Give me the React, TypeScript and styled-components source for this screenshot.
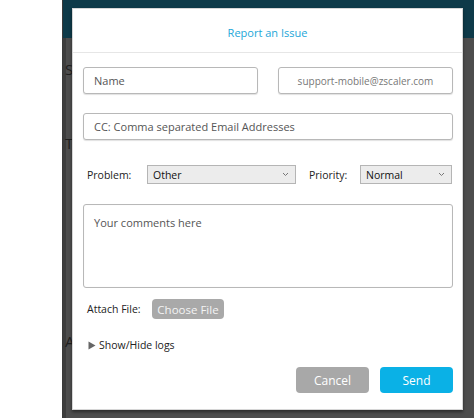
import { FC } from "react";
import styled, { createGlobalStyle } from "styled-components";

const GlobalStyle = createGlobalStyle`
  html, body {
    margin: 0;
    padding: 0;
    background: #ffffff;
    font-family: "Open Sans", "Noto Sans", sans-serif;
  }
  * {
    box-sizing: border-box;
  }
`;

const App: FC = () => {
  return (
    <>
      <GlobalStyle />
      <Page>
        <Gutter />
        <AppShell>
          <AppHeader />
          <AppBody>
            <BackLetter $top={22}>S</BackLetter>
            <BackLetter $top={56}>T</BackLetter>
            <BackLetter $top={180}>A</BackLetter>
          </AppBody>
          <Dialog>
            <DialogHeader>Report an Issue</DialogHeader>
            <DialogContent>
              <Row>
                <HalfInput placeholder="Name" />
                <EmailInput value="support-mobile@zscaler.com" readOnly />
              </Row>
              <TextInput placeholder="CC: Comma separated Email Addresses" />
              <SelectRow>
                <Label $width={60}>Problem:</Label>
                <SelectBox $width={149}>
                  <span>Other</span>
                  <Chevron />
                </SelectBox>
                <Label $width={51} $gap={13}>
                  Priority:
                </Label>
                <SelectBox $width={92}>
                  <span>Normal</span>
                  <Chevron />
                </SelectBox>
              </SelectRow>
              <Comments placeholder="Your comments here" />
              <AttachRow>
                <Label $width={65}>Attach File:</Label>
                <ChooseFile>Choose File</ChooseFile>
              </AttachRow>
              <LogsToggle>
                <Triangle />
                Show/Hide logs
              </LogsToggle>
              <Actions>
                <ActionButton $primary={false}>Cancel</ActionButton>
                <ActionButton $primary>Send</ActionButton>
              </Actions>
            </DialogContent>
          </Dialog>
        </AppShell>
      </Page>
    </>
  );
};

const Chevron: FC = () => (
  <svg width="7" height="5" viewBox="0 0 7 5">
    <path d="M1 1 L3.5 3.5 L6 1" fill="none" stroke="#777" strokeWidth="1" />
  </svg>
);

const Triangle: FC = () => (
  <svg width="8" height="9" viewBox="0 0 8 9">
    <path d="M0.5 0.5 L7.5 4.5 L0.5 8.5 Z" fill="#666" />
  </svg>
);

export default App;

const Page = styled.div`
  display: flex;
  width: 474px;
  height: 418px;
  overflow: hidden;
`;

const Gutter = styled.div`
  width: 62px;
  flex-shrink: 0;
  background: #ffffff;
`;

const AppShell = styled.div`
  position: relative;
  flex-grow: 1;
  display: flex;
  flex-direction: column;
  background: #4a4a4a;
  border-left: 1px solid #3a3a3a;
`;

const AppHeader = styled.div`
  height: 38px;
  background: #0e3a49;
`;

const AppBody = styled.div`
  flex-grow: 1;
  display: flex;
  flex-direction: column;
  padding-left: 2px;
  background: linear-gradient(90deg, #3d3d3d 0 3px, #4d4d4d 3px);
`;

const BackLetter = styled.span<{ $top: number }>`
  margin-top: ${(p) => p.$top}px;
  font-size: 15px;
  line-height: 18px;
  color: #1f1f1f;
`;

const Dialog = styled.div`
  position: absolute;
  left: 9px;
  top: 8px;
  width: 391px;
  height: 402px;
  display: flex;
  flex-direction: column;
  background: #ffffff;
  border: 1px solid #d6d6d6;
  box-shadow: 0 2px 3px rgba(0, 0, 0, 0.45);
`;

const DialogHeader = styled.div`
  height: 44px;
  display: flex;
  align-items: center;
  justify-content: center;
  padding-top: 3px;
  font-size: 11px;
  color: #1ba6d8;
  border-bottom: 1px solid #e6e6e6;
`;

const DialogContent = styled.div`
  display: flex;
  flex-direction: column;
  padding: 14px 9px 0 10px;
`;

const Row = styled.div`
  display: flex;
  justify-content: space-between;
  margin-bottom: 19px;
`;

const TextInput = styled.input`
  width: 100%;
  height: 27px;
  padding: 0 10px;
  font-family: inherit;
  font-size: 11px;
  color: #333;
  border: 1px solid #b8b8b8;
  border-radius: 3px;
  box-shadow: 0 1px 1px rgba(0, 0, 0, 0.12);
  outline: none;

  &::placeholder {
    color: #555;
  }
`;

const HalfInput = styled(TextInput)`
  width: 175px;
`;

const EmailInput = styled(HalfInput)`
  text-align: center;
  font-size: 10px;
  color: #777;
`;

const SelectRow = styled.div`
  display: flex;
  align-items: center;
  margin-top: 25px;
`;

const Label = styled.span<{ $width: number; $gap?: number }>`
  width: ${(p) => p.$width}px;
  margin-left: ${(p) => p.$gap ?? 4}px;
  font-size: 10.5px;
  color: #222;
`;

const SelectBox = styled.div<{ $width: number }>`
  width: ${(p) => p.$width}px;
  height: 19px;
  display: flex;
  align-items: center;
  justify-content: space-between;
  padding: 0 6px 0 5px;
  font-size: 10.5px;
  color: #111;
  background: #ececec;
  border: 1px solid #b5b5b5;
`;

const Comments = styled.textarea`
  margin-top: 20px;
  height: 84px;
  padding: 10px 10px;
  resize: none;
  font-family: inherit;
  font-size: 11px;
  border: 1px solid #b8b8b8;
  border-radius: 3px;
  box-shadow: inset 0 0 1px rgba(0, 0, 0, 0.1);
  outline: none;

  &::placeholder {
    color: #555;
  }
`;

const AttachRow = styled.div`
  display: flex;
  align-items: center;
  margin-top: 11px;
`;

const ChooseFile = styled.button`
  width: 72px;
  height: 20px;
  padding: 0;
  font-family: inherit;
  font-size: 11.5px;
  color: #f4f4f4;
  background: #a9a9a9;
  border: none;
  border-radius: 4px;
`;

const LogsToggle = styled.div`
  display: flex;
  align-items: center;
  gap: 3px;
  margin-top: 19px;
  margin-left: 5px;
  font-size: 10.5px;
  color: #222;
`;

const Actions = styled.div`
  display: flex;
  justify-content: flex-end;
  gap: 11px;
  margin-top: 15px;
`;

const ActionButton = styled.button<{ $primary: boolean }>`
  width: 73px;
  height: 26px;
  font-family: inherit;
  font-size: 12px;
  color: #ffffff;
  background: ${(p) => (p.$primary ? "#0ab1e6" : "#a8a8a8")};
  border: none;
  border-radius: 4px;
`;
